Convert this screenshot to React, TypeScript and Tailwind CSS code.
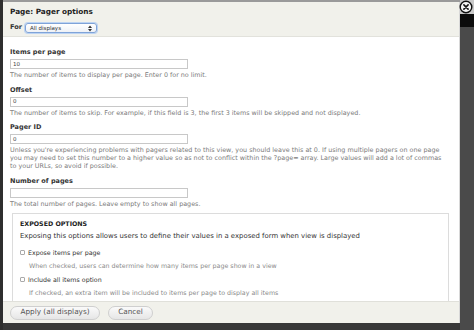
import React from 'react';

const font = "font-['DejaVu_Sans','Verdana',sans-serif]";

interface FieldProps {
  label: string;
  value: string;
  children: React.ReactNode;
  first?: boolean;
}

function Field({ label, value, children, first }: FieldProps) {
  return (
    <div className={first ? '' : 'mt-[6.5px]'}>
      <div className="text-[6.5px] font-bold leading-[9px] text-[#333]">{label}</div>
      <div className="mt-[2px] flex h-[10px] w-[178px] items-center border border-[#c8c8c8] bg-white pl-[2px] text-[5.5px] text-[#444]">
        {value}
      </div>
      <p className="mt-[2px] text-[6.4px] leading-[8px] text-[#7a7a7a]">{children}</p>
    </div>
  );
}

function CheckRow({ label, desc, first }: { label: string; desc: string; first?: boolean }) {
  return (
    <div className={first ? 'mt-[7px]' : 'mt-[5.5px]'}>
      <div className="flex h-[9px] items-center gap-[3px]">
        <span className="h-[5px] w-[5px] rounded-[1px] border border-[#aaa] bg-white" />
        <span className="text-[6.3px] leading-[9px] text-[#333]">{label}</span>
      </div>
      <p className="ml-[9px] mt-[4.5px] text-[6.3px] leading-[8px] text-[#8a8a8a]">{desc}</p>
    </div>
  );
}

export default function App() {
  return (
    <div className={`${font} relative flex h-[330px] w-[474px] overflow-hidden bg-[#3b3b3b]`}>
      {/* left edge of backdrop */}
      <div className="w-[3px] bg-[#2e2e2e]" />

      <div className="flex w-[457px] flex-col">
        <div className="h-[2px] bg-[#9a9a9a]" />

        {/* dialog */}
        <div className="flex h-[321px] flex-col border-r border-[#d8d8d8] bg-white">
          <div className="h-[35px] border-b border-[#e2e2dc] bg-[#f1f1eb] px-[7px] pt-[4px]">
            <h1 className="text-[7.3px] font-bold leading-[12px] text-[#222]">Page: Pager options</h1>
            <div className="mt-[5px] flex h-[10px] items-center gap-[3px]">
              <span className="text-[6.6px] font-bold text-[#333]">For</span>
              <div className="flex h-[10px] w-[72px] items-center justify-between rounded-[3px] border border-[#7fa3d8] bg-gradient-to-b from-white to-[#eef1f6] px-[4px] shadow-[0_0_0_1px_#bcd3f2]">
                <span className="text-[5.5px] text-[#333]">All displays</span>
                <svg width="4" height="7" viewBox="0 0 4 7">
                  <path d="M0 3 L2 0.5 L4 3 Z M0 4 L2 6.5 L4 4 Z" fill="#333" />
                </svg>
              </div>
            </div>
          </div>

          <div className="flex-1 overflow-hidden pl-[7px] pr-[10px] pt-[11px]">
            <Field label="Items per page" value="10" first>
              The number of items to display per page. Enter 0 for no limit.
            </Field>
            <Field label="Offset" value="0">
              The number of items to skip. For example, if this field is 3, the first 3 items will be skipped and not displayed.
            </Field>
            <Field label="Pager ID" value="0">
              Unless you're experiencing problems with pagers related to this view, you should leave this at 0. If using multiple pagers on one page you may need to set this number to a higher value so as not to conflict within the ?page= array. Large values will add a lot of commas to your URLs, so avoid if possible.
            </Field>
            <Field label="Number of pages" value="">
              The total number of pages. Leave empty to show all pages.
            </Field>

            <div className="ml-[2px] mt-[5px] border border-[#dcdcdc] px-[7px] pb-[10px] pt-[5px]">
              <div className="text-[6.3px] font-bold leading-[9px] text-[#222]">EXPOSED OPTIONS</div>
              <p className="mt-[4.5px] text-[6.9px] leading-[9px] text-[#333]">
                Exposing this options allows users to define their values in a exposed form when view is displayed
              </p>
              <CheckRow
                first
                label="Expose items per page"
                desc="When checked, users can determine how many items per page show in a view"
              />
              <CheckRow
                label="Include all items option"
                desc="If checked, an extra item will be included to items per page to display all items"
              />
            </div>
          </div>

          <div className="flex h-[22px] items-center gap-[8px] border-t border-[#e0e0da] bg-[#f1f1eb] pl-[7px]">
            <button className="h-[14px] w-[90px] rounded-full border border-[#cfcfcf] bg-gradient-to-b from-[#fafafa] to-[#e6e6e6] text-[7.3px] text-[#555]">
              Apply (all displays)
            </button>
            <button className="h-[14px] w-[45px] rounded-full border border-[#cfcfcf] bg-gradient-to-b from-[#fafafa] to-[#e6e6e6] text-[7.3px] text-[#555]">
              Cancel
            </button>
          </div>
        </div>

        <div className="flex-1 bg-[#383838]" />
      </div>

      {/* right edge of backdrop */}
      <div className="flex flex-1 flex-col">
        <div className="h-[14px] bg-[#c9c9c9]" />
        <div className="h-[13px] bg-[#0c0c0c]" />
        <div className="flex-1 bg-[#4a4a4a]" />
      </div>

      {/* close button */}
      <svg className="absolute left-[459px] top-[0px]" width="14" height="14" viewBox="0 0 14 14">
        <circle cx="7" cy="7" r="5.8" fill="#f4f4f4" stroke="#111" strokeWidth="1.4" />
        <path d="M4.9 4.9 L9.1 9.1 M9.1 4.9 L4.9 9.1" stroke="#111" strokeWidth="1.6" strokeLinecap="round" />
      </svg>
    </div>
  );
}
